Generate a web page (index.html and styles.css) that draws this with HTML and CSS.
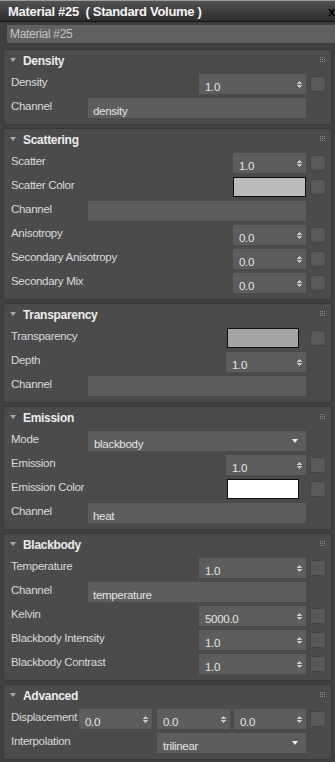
FILE: index.html
```html
<!DOCTYPE html>
<html lang="en">
<head>
	<meta charset="utf-8">
	<title>Material #25 (Standard Volume)</title>
	<link rel="stylesheet" href="styles.css">
</head>
<body>
	<div class="titlebar">
		<span class="title">Material #25&nbsp; ( Standard Volume )</span>
		<span class="close">x</span>
	</div>
	<div class="namefield">Material #25</div>

	<div class="rollouts">
		<div class="rollout">
			<div class="head"><span class="tri"></span><span class="name">Density</span><svg class="grip" width="5" height="5" viewBox="0 0 5 5"><path d="M0 0h1v1H0zM2 0h1v1H2zM4 0h1v1H4zM0 2h1v1H0zM2 2h1v1H2zM4 2h1v1H4zM0 4h1v1H0zM2 4h1v1H2zM4 4h1v1H4z"/></svg></div>
			<div class="body">
				<div class="row"><span class="label">Density</span><div class="field spin w107"><span class="val">1.0</span><span class="arrows"></span></div><span class="check"></span></div>
				<div class="row"><span class="label">Channel</span><div class="field text w218"><span class="val">density</span></div><span class="check off"></span></div>
			</div>
		</div>

		<div class="rollout">
			<div class="head"><span class="tri"></span><span class="name">Scattering</span><svg class="grip" width="5" height="5" viewBox="0 0 5 5"><path d="M0 0h1v1H0zM2 0h1v1H2zM4 0h1v1H4zM0 2h1v1H0zM2 2h1v1H2zM4 2h1v1H4zM0 4h1v1H0zM2 4h1v1H2zM4 4h1v1H4z"/></svg></div>
			<div class="body">
				<div class="row"><span class="label">Scatter</span><div class="field spin w73"><span class="val">1.0</span><span class="arrows"></span></div><span class="check"></span></div>
				<div class="row"><span class="label">Scatter Color</span><div class="swatch w73 light"></div><span class="check"></span></div>
				<div class="row"><span class="label">Channel</span><div class="field text w218"></div><span class="check off"></span></div>
				<div class="row"><span class="label">Anisotropy</span><div class="field spin w73"><span class="val">0.0</span><span class="arrows"></span></div><span class="check"></span></div>
				<div class="row"><span class="label">Secondary Anisotropy</span><div class="field spin w73"><span class="val">0.0</span><span class="arrows"></span></div><span class="check"></span></div>
				<div class="row"><span class="label">Secondary Mix</span><div class="field spin w73"><span class="val">0.0</span><span class="arrows"></span></div><span class="check"></span></div>
			</div>
		</div>

		<div class="rollout">
			<div class="head"><span class="tri"></span><span class="name">Transparency</span><svg class="grip" width="5" height="5" viewBox="0 0 5 5"><path d="M0 0h1v1H0zM2 0h1v1H2zM4 0h1v1H4zM0 2h1v1H0zM2 2h1v1H2zM4 2h1v1H4zM0 4h1v1H0zM2 4h1v1H2zM4 4h1v1H4z"/></svg></div>
			<div class="body">
				<div class="row"><span class="label">Transparency</span><div class="swatch w72 mid short"></div><span class="check"></span></div>
				<div class="row"><span class="label">Depth</span><div class="field spin w80"><span class="val">1.0</span><span class="arrows"></span></div><span class="check off"></span></div>
				<div class="row"><span class="label">Channel</span><div class="field text w218"></div><span class="check off"></span></div>
			</div>
		</div>

		<div class="rollout">
			<div class="head"><span class="tri"></span><span class="name">Emission</span><svg class="grip" width="5" height="5" viewBox="0 0 5 5"><path d="M0 0h1v1H0zM2 0h1v1H2zM4 0h1v1H4zM0 2h1v1H0zM2 2h1v1H2zM4 2h1v1H4zM0 4h1v1H0zM2 4h1v1H2zM4 4h1v1H4z"/></svg></div>
			<div class="body">
				<div class="row"><span class="label">Mode</span><div class="field drop w218"><span class="val">blackbody</span><span class="down"></span></div><span class="check off"></span></div>
				<div class="row"><span class="label">Emission</span><div class="field spin w80"><span class="val">1.0</span><span class="arrows"></span></div><span class="check"></span></div>
				<div class="row"><span class="label">Emission Color</span><div class="swatch w72 white short"></div><span class="check"></span></div>
				<div class="row"><span class="label">Channel</span><div class="field text w218"><span class="val">heat</span></div><span class="check off"></span></div>
			</div>
		</div>

		<div class="rollout">
			<div class="head"><span class="tri"></span><span class="name">Blackbody</span><svg class="grip" width="5" height="5" viewBox="0 0 5 5"><path d="M0 0h1v1H0zM2 0h1v1H2zM4 0h1v1H4zM0 2h1v1H0zM2 2h1v1H2zM4 2h1v1H4zM0 4h1v1H0zM2 4h1v1H2zM4 4h1v1H4z"/></svg></div>
			<div class="body">
				<div class="row"><span class="label">Temperature</span><div class="field spin w107"><span class="val">1.0</span><span class="arrows"></span></div><span class="check"></span></div>
				<div class="row"><span class="label">Channel</span><div class="field text w218"><span class="val">temperature</span></div><span class="check off"></span></div>
				<div class="row"><span class="label">Kelvin</span><div class="field spin w107"><span class="val">5000.0</span><span class="arrows"></span></div><span class="check"></span></div>
				<div class="row"><span class="label">Blackbody Intensity</span><div class="field spin w107"><span class="val">1.0</span><span class="arrows"></span></div><span class="check"></span></div>
				<div class="row"><span class="label">Blackbody Contrast</span><div class="field spin w107"><span class="val">1.0</span><span class="arrows"></span></div><span class="check"></span></div>
			</div>
		</div>

		<div class="rollout">
			<div class="head"><span class="tri"></span><span class="name">Advanced</span><svg class="grip" width="5" height="5" viewBox="0 0 5 5"><path d="M0 0h1v1H0zM2 0h1v1H2zM4 0h1v1H4zM0 2h1v1H0zM2 2h1v1H2zM4 2h1v1H4zM0 4h1v1H0zM2 4h1v1H2zM4 4h1v1H4z"/></svg></div>
			<div class="body">
				<div class="row">
					<span class="label">Displacement</span>
					<div class="triple">
						<div class="field spin w73"><span class="val">0.0</span><span class="arrows"></span></div>
						<div class="field spin w73"><span class="val">0.0</span><span class="arrows"></span></div>
						<div class="field spin w72"><span class="val">0.0</span><span class="arrows"></span></div>
					</div>
					<span class="check"></span>
				</div>
				<div class="row"><span class="label">Interpolation</span><div class="field drop w149"><span class="val">trilinear</span><span class="down"></span></div><span class="check off"></span></div>
			</div>
		</div>
	</div>
</body>
</html>
```

FILE: styles.css
```css
html, body {
	margin: 0;
	padding: 0;
}
body {
	width: 335px;
	height: 762px;
	overflow: hidden;
	background-color: #404040;
	font-family: "Liberation Sans", Arial, sans-serif;
	font-size: 11.5px;
	letter-spacing: -0.3px;
	color: #dcdcdc;
}

/* title + name */
.titlebar {
	height: 20px;
	display: flex;
	align-items: center;
	justify-content: space-between;
	border-top: 1px solid #9a9a9a;
	border-bottom: 1px solid #141414;
	background: linear-gradient(#525252, #2d2d2d);
	padding-left: 8px;
	overflow: hidden;
}
.title {
	font-size: 13px;
	font-weight: bold;
	letter-spacing: -0.3px;
	color: #f4f4f4;
	white-space: pre;
}
.close {
	font-size: 13px;
	font-weight: bold;
	color: #050505;
	margin-right: 0;
}
.namefield {
	margin: 3px 0 6px 7px;
	height: 18px;
	line-height: 18px;
	padding-left: 3px;
	font-size: 12px;
	background-color: #606060;
	color: #c4c4c4;
}

/* rollouts */
.rollouts {
	padding-left: 3px;
}
.rollout {
	width: 327px;
	margin-bottom: 3px;
	border: 1px solid #383838;
	border-radius: 3px;
	background-color: #4b4b4b;
}
.head {
	height: 22px;
	display: flex;
	align-items: center;
	padding-left: 6px;
}
.tri {
	width: 0;
	height: 0;
	border-left: 3px solid transparent;
	border-right: 3px solid transparent;
	border-top: 4px solid #a8a8a8;
	margin-right: 7px;
	margin-top: -2px;
}
.name {
	font-weight: bold;
	font-size: 12px;
	color: #ececec;
	flex: 1;
}
.grip {
	fill: #8e8e8e;
	margin-right: 6px;
	margin-top: -3px;
}
.body {
	display: flex;
	flex-direction: column;
	gap: 4px;
	padding: 2px 5px 6px 7px;
}
.row {
	height: 20px;
	display: flex;
	align-items: center;
	gap: 4px;
}
.label {
	flex: 1;
	min-width: 0;
	white-space: nowrap;
	padding-bottom: 4px;
	color: #dadada;
}

/* controls */
.field {
	box-sizing: border-box;
	height: 20px;
	display: flex;
	align-items: center;
	flex: none;
	background-color: #5d5d5d;
	color: #e4e4e4;
	padding: 0 4px 0 6px;
}
.field.text {
	padding-left: 5px;
}
.val {
	flex: 1;
	padding-top: 5px;
	white-space: nowrap;
}
.arrows {
	width: 5px;
	height: 9px;
	background:
		linear-gradient(to bottom right, transparent 50%, #c4c4c4 50%) 0 0 / 3px 4px no-repeat,
		linear-gradient(to bottom left, transparent 50%, #c4c4c4 50%) 2px 0 / 3px 4px no-repeat,
		linear-gradient(to top right, transparent 50%, #c4c4c4 50%) 0 5px / 3px 4px no-repeat,
		linear-gradient(to top left, transparent 50%, #c4c4c4 50%) 2px 5px / 3px 4px no-repeat;
}
.down {
	width: 0;
	height: 0;
	border-left: 3px solid transparent;
	border-right: 3px solid transparent;
	border-top: 4px solid #f0f0f0;
	margin-right: 4px;
	margin-top: -1px;
}
.triple {
	display: flex;
	flex: none;
	gap: 4px;
}
.triple .field:first-child {
	margin-right: 1px;
}
.swatch {
	box-sizing: border-box;
	height: 20px;
	flex: none;
	border: 1px solid #0c0c0c;
}
.swatch.short {
	margin-right: 7px;
}
.light { background-color: #bbbbbb; }
.mid { background-color: #a5a5a5; }
.white { background-color: #ffffff; }

.check {
	box-sizing: border-box;
	width: 16px;
	height: 16px;
	flex: none;
	border: 1px solid #434343;
	border-radius: 3px;
	background-color: #595959;
}
.check.off {
	visibility: hidden;
}

.w72 { width: 72px; }
.w73 { width: 73px; }
.w80 { width: 80px; }
.w107 { width: 107px; }
.w149 { width: 149px; }
.w218 { width: 218px; }
```
